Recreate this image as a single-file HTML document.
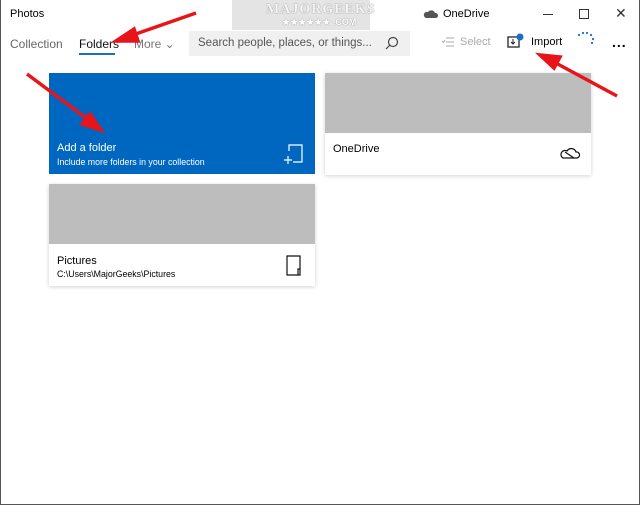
<!DOCTYPE html><html><head><style>
body{margin:0;width:640px;height:506px;background:#fff;font-family:"Liberation Sans",sans-serif;position:relative;overflow:hidden}
.a{position:absolute}
.frame{left:0;top:0;width:638px;height:504px;border:1px solid #555;border-top:none}
.card{background:#fff;box-shadow:0 1px 4px rgba(0,0,0,.18)}
.gray{background:#bdbdbd}
t{position:absolute;white-space:nowrap}
</style></head><body>
<div class="a frame"></div>
<t style="left:10px;top:8px;font-size:11px;color:#000">Photos</t>
<div class="a" style="left:232px;top:0;width:138px;height:30px;background:#e4e4e4"></div>
<t style="left:266px;top:2px;font-size:14px;font-weight:bold;color:#f4f4f4;letter-spacing:1px;text-shadow:0 0 1px #666;font-family:'Liberation Serif',serif">MAJORGEEKS</t>
<t style="left:282px;top:17px;font-size:9px;font-weight:bold;color:#fff;text-shadow:0 0 1px #666">★★★★★★ .COM</t>
<svg class="a" style="left:423px;top:9px" width="15" height="10"><path d="M3 9h10a2.5 2.5 0 0 0-1-5 4 4 0 0 0-7-1 3 3 0 0 0-2 6z" fill="#555"/></svg>
<t style="left:443px;top:8px;font-size:11px">OneDrive</t>
<div class="a" style="left:543px;top:14px;width:10px;height:1px;background:#333"></div>
<div class="a" style="left:579px;top:9px;width:8px;height:8px;border:1px solid #333"></div>
<t style="left:615px;top:5px;font-size:14px;color:#333">✕</t>
<t style="left:10px;top:37px;font-size:12px;color:#666">Collection</t>
<t style="left:79px;top:37px;font-size:12px;color:#111">Folders</t>
<div class="a" style="left:79px;top:53px;width:36px;height:2px;background:#1a6fc0"></div>
<t style="left:134px;top:37px;font-size:12px;color:#777">More ⌄</t>
<div class="a" style="left:189px;top:31px;width:221px;height:25px;background:#f0f0f0"></div>
<t style="left:198px;top:37px;font-size:11.5px;color:#555">Search people, places, or things...</t>
<svg class="a" style="left:385px;top:36px" width="14" height="14"><circle cx="8" cy="6" r="4.5" fill="none" stroke="#444" stroke-width="1.2"/><path d="M5 9l-4 4" stroke="#444" stroke-width="1.2"/></svg>
<svg class="a" style="left:441px;top:36px" width="14" height="12"><path d="M5 2h8M5 6h8M5 10h8M1 5l1.5 1.5L4 4" stroke="#aaa" fill="none"/></svg>
<t style="left:460px;top:36px;font-size:11px;color:#aaa">Select</t>
<svg class="a" style="left:507px;top:33px" width="18" height="16"><rect x="1" y="4" width="11" height="10" fill="none" stroke="#222" stroke-width="1.3"/><path d="M6 6v5m-2-2l2 2 2-2" stroke="#222" fill="none"/><circle cx="13" cy="4" r="3.5" fill="#1a6fc0"/></svg>
<t style="left:531px;top:36px;font-size:11px">Import</t>
<svg class="a" style="left:576px;top:30px" width="20" height="16"><g fill="#1a6fc0"><circle cx="3" cy="5" r="1.1"/><circle cx="7" cy="3" r="1.1"/><circle cx="11" cy="3" r="1.1"/><circle cx="15" cy="5" r="1.1"/><circle cx="17" cy="9" r="1.1"/><circle cx="16" cy="13" r="1.1"/></g></svg>
<t style="left:612px;top:34px;font-size:14px;font-weight:bold;letter-spacing:1px">...</t>
<div class="a" style="left:49px;top:73px;width:266px;height:101px;background:#0067c0"></div>
<t style="left:57px;top:142px;font-size:11px;color:#fff">Add a folder</t>
<t style="left:57px;top:157px;font-size:8.8px;color:#fff">Include more folders in your collection</t>
<svg class="a" style="left:283px;top:143px" width="22" height="22"><path d="M6 8V2h13v17h-9M1 17h8M5 13v8" stroke="#fff" fill="none" stroke-width="1.2"/></svg>
<div class="a card" style="left:325px;top:73px;width:266px;height:102px"><div class="gray" style="height:60px"></div></div>
<t style="left:333px;top:143px;font-size:11px">OneDrive</t>
<svg class="a" style="left:560px;top:146px" width="20" height="14"><path d="M3 12h14a3 3 0 0 0-1-6 5 5 0 0 0-9-1 3.5 3.5 0 0 0-4 7zM5 6l9 6" fill="none" stroke="#111" stroke-width="1.2"/></svg>
<div class="a card" style="left:49px;top:184px;width:266px;height:102px"><div class="gray" style="height:60px"></div></div>
<t style="left:57px;top:255px;font-size:11px">Pictures</t>
<t style="left:57px;top:269px;font-size:8.8px">C:\Users\MajorGeeks\Pictures</t>
<svg class="a" style="left:285px;top:255px" width="18" height="22"><path d="M2 1h13v19H2zM15 14h-2v6" fill="none" stroke="#111" stroke-width="1.2"/></svg>
<svg class="a" style="left:0;top:0" width="640" height="506"><g stroke="#e8141a" stroke-width="3.5" fill="#e8141a">
<line x1="196" y1="13" x2="130" y2="36"/><path d="M116 41l18-12 4 12z"/>
<line x1="27" y1="74" x2="90" y2="121"/><path d="M101 130l-19-6 8-10z"/>
<line x1="617" y1="96" x2="554" y2="62"/><path d="M540 55l20 2-6 11z"/></g></svg>
</body></html>
